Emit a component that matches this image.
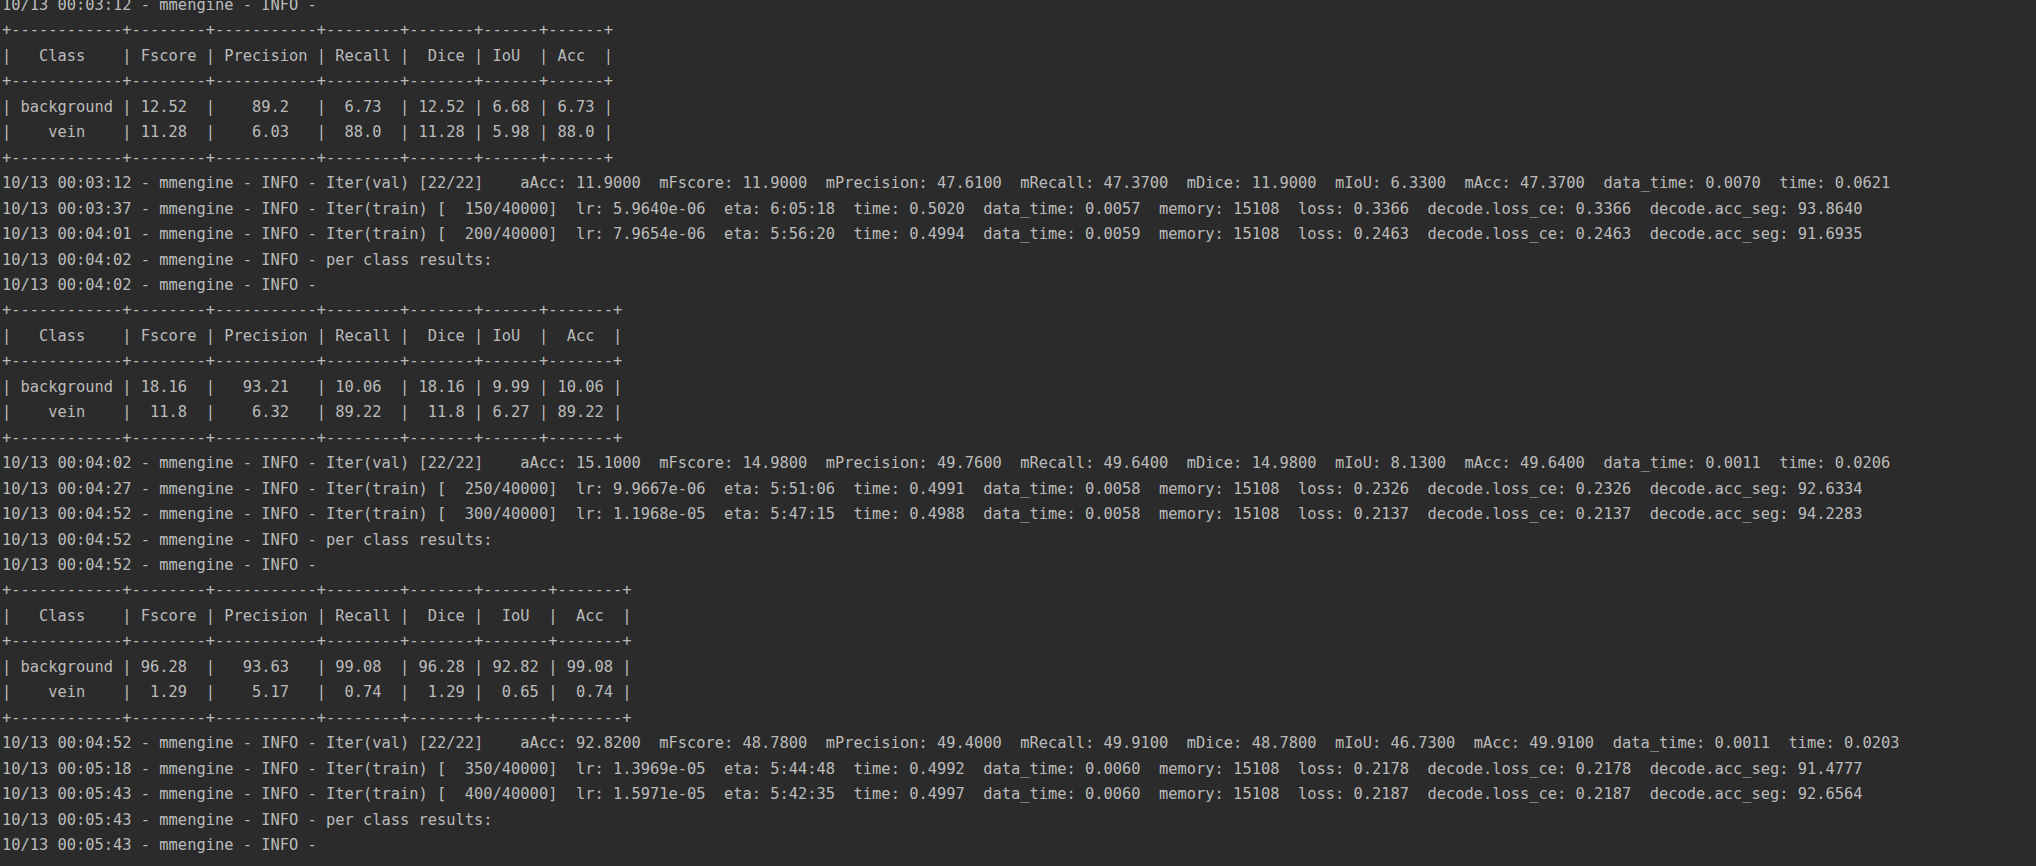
const PREFIX = (t: string) => `10/13 ${t} - mmengine - INFO - `;

const tableOne = [
  "+------------+--------+-----------+--------+-------+------+------+",
  "|   Class    | Fscore | Precision | Recall |  Dice | IoU  | Acc  |",
  "+------------+--------+-----------+--------+-------+------+------+",
  "| background | 12.52  |    89.2   |  6.73  | 12.52 | 6.68 | 6.73 |",
  "|    vein    | 11.28  |    6.03   |  88.0  | 11.28 | 5.98 | 88.0 |",
  "+------------+--------+-----------+--------+-------+------+------+",
];

const tableTwo = [
  "+------------+--------+-----------+--------+-------+------+-------+",
  "|   Class    | Fscore | Precision | Recall |  Dice | IoU  |  Acc  |",
  "+------------+--------+-----------+--------+-------+------+-------+",
  "| background | 18.16  |   93.21   | 10.06  | 18.16 | 9.99 | 10.06 |",
  "|    vein    |  11.8  |    6.32   | 89.22  |  11.8 | 6.27 | 89.22 |",
  "+------------+--------+-----------+--------+-------+------+-------+",
];

const tableThree = [
  "+------------+--------+-----------+--------+-------+-------+-------+",
  "|   Class    | Fscore | Precision | Recall |  Dice |  IoU  |  Acc  |",
  "+------------+--------+-----------+--------+-------+-------+-------+",
  "| background | 96.28  |   93.63   | 99.08  | 96.28 | 92.82 | 99.08 |",
  "|    vein    |  1.29  |    5.17   |  0.74  |  1.29 |  0.65 |  0.74 |",
  "+------------+--------+-----------+--------+-------+-------+-------+",
];

const lines: string[] = [
  PREFIX("00:03:12"),
  ...tableOne,
  PREFIX("00:03:12") +
    "Iter(val) [22/22]    aAcc: 11.9000  mFscore: 11.9000  mPrecision: 47.6100  mRecall: 47.3700  mDice: 11.9000  mIoU: 6.3300  mAcc: 47.3700  data_time: 0.0070  time: 0.0621",
  PREFIX("00:03:37") +
    "Iter(train) [  150/40000]  lr: 5.9640e-06  eta: 6:05:18  time: 0.5020  data_time: 0.0057  memory: 15108  loss: 0.3366  decode.loss_ce: 0.3366  decode.acc_seg: 93.8640",
  PREFIX("00:04:01") +
    "Iter(train) [  200/40000]  lr: 7.9654e-06  eta: 5:56:20  time: 0.4994  data_time: 0.0059  memory: 15108  loss: 0.2463  decode.loss_ce: 0.2463  decode.acc_seg: 91.6935",
  PREFIX("00:04:02") + "per class results:",
  PREFIX("00:04:02"),
  ...tableTwo,
  PREFIX("00:04:02") +
    "Iter(val) [22/22]    aAcc: 15.1000  mFscore: 14.9800  mPrecision: 49.7600  mRecall: 49.6400  mDice: 14.9800  mIoU: 8.1300  mAcc: 49.6400  data_time: 0.0011  time: 0.0206",
  PREFIX("00:04:27") +
    "Iter(train) [  250/40000]  lr: 9.9667e-06  eta: 5:51:06  time: 0.4991  data_time: 0.0058  memory: 15108  loss: 0.2326  decode.loss_ce: 0.2326  decode.acc_seg: 92.6334",
  PREFIX("00:04:52") +
    "Iter(train) [  300/40000]  lr: 1.1968e-05  eta: 5:47:15  time: 0.4988  data_time: 0.0058  memory: 15108  loss: 0.2137  decode.loss_ce: 0.2137  decode.acc_seg: 94.2283",
  PREFIX("00:04:52") + "per class results:",
  PREFIX("00:04:52"),
  ...tableThree,
  PREFIX("00:04:52") +
    "Iter(val) [22/22]    aAcc: 92.8200  mFscore: 48.7800  mPrecision: 49.4000  mRecall: 49.9100  mDice: 48.7800  mIoU: 46.7300  mAcc: 49.9100  data_time: 0.0011  time: 0.0203",
  PREFIX("00:05:18") +
    "Iter(train) [  350/40000]  lr: 1.3969e-05  eta: 5:44:48  time: 0.4992  data_time: 0.0060  memory: 15108  loss: 0.2178  decode.loss_ce: 0.2178  decode.acc_seg: 91.4777",
  PREFIX("00:05:43") +
    "Iter(train) [  400/40000]  lr: 1.5971e-05  eta: 5:42:35  time: 0.4997  data_time: 0.0060  memory: 15108  loss: 0.2187  decode.loss_ce: 0.2187  decode.acc_seg: 92.6564",
  PREFIX("00:05:43") + "per class results:",
  PREFIX("00:05:43"),
];

export default function App() {
  return (
    <div className="h-screen w-full overflow-hidden bg-[#2b2b2b]">
      {/* console output, scrolled so the first line is cut at the top */}
      <pre className="-mt-[7px] pl-[2px] font-['DejaVu_Sans_Mono',monospace] text-[15.38px] leading-[25.45px] text-[#bbbbbb] whitespace-pre">
        {lines.map((line, i) => (
          <div key={i}>{line === "" ? " " : line}</div>
        ))}
      </pre>
    </div>
  );
}
